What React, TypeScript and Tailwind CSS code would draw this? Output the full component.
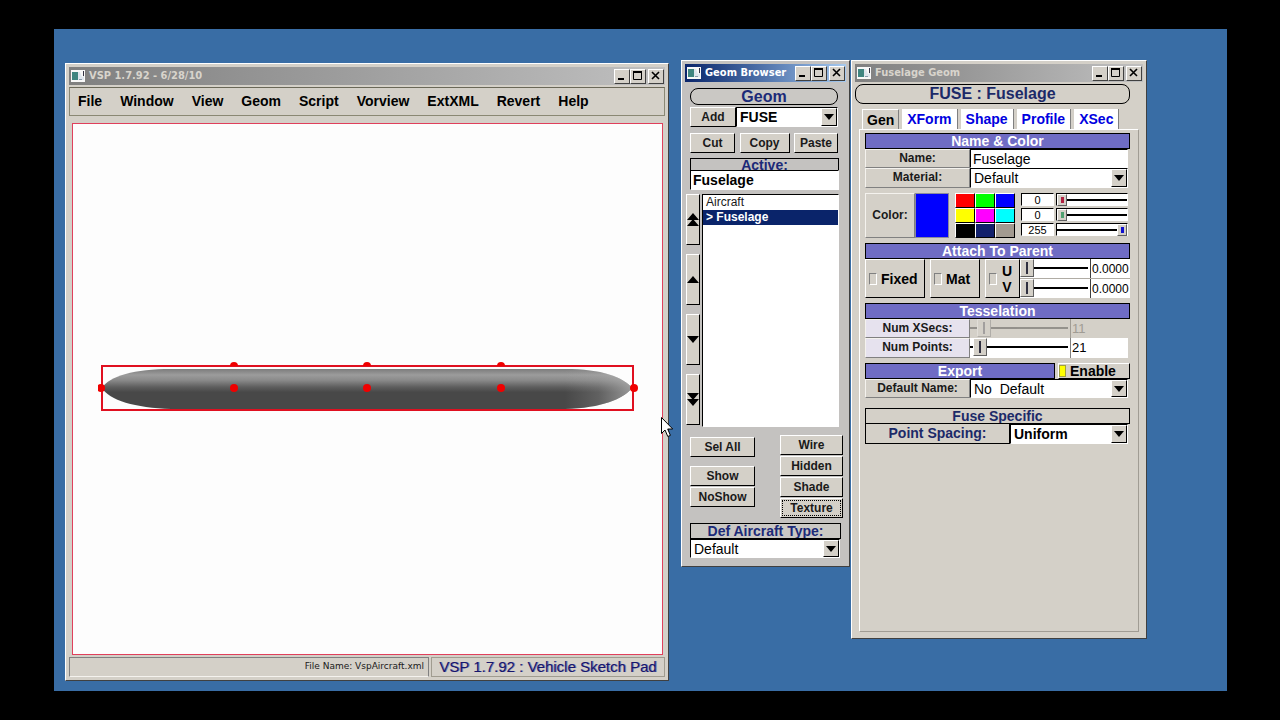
import type { ReactNode } from "react";

const raised =
  "border border-t-white border-l-white border-r-black border-b-black bg-[#d4d0c8]";
const sunken = "border border-t-black border-l-black border-r-white border-b-white bg-white";

function AppIcon() {
  return (
    <svg width="14" height="12" viewBox="0 0 14 12" aria-hidden="true" className="shrink-0">
      <rect x="0" y="0" width="14" height="12" fill="#f8f8f8" />
      <rect x="1" y="2" width="6" height="8" fill="#3f8580" />
      <path d="M7 2h2l2 5h1V2h1v8H7z" fill="#dfe6ee" />
      <path d="M12.500 1v5" stroke="#334" strokeWidth="1" />
      <rect x="8" y="9" width="3" height="1" fill="#8899aa" />
    </svg>
  );
}

function CaptionButton({ label, children, className = "" }: { label: string; children: ReactNode; className?: string }) {
  return (
    <button
      type="button"
      aria-label={label}
      className={`flex h-[15px] w-4 items-center justify-center border border-t-white border-l-white border-r-[#404040] border-b-[#404040] bg-[#d4d0c8] ${className}`}
    >
      <svg width="12" height="12" viewBox="0 0 12 12" fill="none" stroke="#000" aria-hidden="true" className="shrink-0">
        {children}
      </svg>
    </button>
  );
}

function AppWindow({ title, active = false, className, children }: { title: string; active?: boolean; className: string; children: ReactNode }) {
  const bar = active
    ? "bg-linear-to-r from-[#0a246a] to-[#a6caf0] text-white"
    : "bg-linear-to-r from-[#808080] to-[#c0c0c0] text-[#d8d4cc]";
  return (
    <section
      aria-label={title}
      className={`absolute flex flex-col border border-t-white border-l-white border-r-[#404040] border-b-[#404040] p-[3px] ${className}`}
    >
      <header className={`flex h-[18px] shrink-0 items-center gap-1 pr-px pl-[2px] ${bar}`}>
        <AppIcon />
        <h2 className="min-w-0 flex-1 whitespace-nowrap font-['DejaVu_Sans_Condensed','DejaVu_Sans',sans-serif] text-[11px] leading-4 font-bold">
          {title}
        </h2>
        <div className="flex">
          <CaptionButton label="Minimize">
            <path d="M2 9h6" strokeWidth="2" />
          </CaptionButton>
          <CaptionButton label="Maximize">
            <path d="M1.5 2.5h8v7h-8z" />
            <path d="M1 2h9" strokeWidth="2" />
          </CaptionButton>
          <CaptionButton label="Close" className="ml-[2px]">
            <path d="M2 2l7 7M9 2l-7 7" strokeWidth="1.600" />
          </CaptionButton>
        </div>
      </header>
      {children}
    </section>
  );
}

function PushButton({ children, className = "" }: { children: ReactNode; className?: string }) {
  return (
    <button type="button" className={`h-5 text-center text-xs leading-4 font-bold text-[#1a1a1a] ${raised} ${className}`}>
      {children}
    </button>
  );
}

function Choice({ label, value, className = "" }: { label: string; value: string; className?: string }) {
  return (
    <div className={`relative flex ${sunken} ${className}`}>
      <select aria-label={label} defaultValue={value} className="h-full w-full appearance-none bg-transparent pl-[3px] leading-4 text-black outline-none">
        <option>{value}</option>
      </select>
      <span className={`pointer-events-none absolute inset-y-0 right-0 flex w-4 items-center justify-center ${raised}`}>
        <svg width="10" height="6" viewBox="0 0 10 6" aria-hidden="true">
          <path d="M0 0h10L5 6z" />
        </svg>
      </span>
    </div>
  );
}

function SectionHeader({ children, className = "" }: { children: ReactNode; className?: string }) {
  return (
    <h3 className={`h-4 overflow-hidden border border-black bg-[#6f6cc4] text-center text-sm leading-[15px] font-bold text-white ${className}`}>
      {children}
    </h3>
  );
}

function Caption({ htmlFor, children, className = "" }: { htmlFor?: string; children: ReactNode; className?: string }) {
  return (
    <label
      htmlFor={htmlFor}
      className={`w-[105px] border border-t-[#f4f2ee] border-l-[#f4f2ee] border-r-[#808080] border-b-[#808080] text-center text-xs leading-[17px] font-bold text-[#1a1a1a] ${className}`}
    >
      {children}
    </label>
  );
}

function FuselageView() {
  return (
    <svg width="540" height="56" viewBox="1 1 540 56" role="img" aria-label="Fuselage side view" className="max-w-full">
      <defs>
        <linearGradient id="hull" x1="0" y1="0" x2="0" y2="1">
          <stop offset="0" stopColor="#7c7c7c" />
          <stop offset="0.15" stopColor="#9c9c9c" />
          <stop offset="0.28" stopColor="#8a8a8a" />
          <stop offset="0.45" stopColor="#5e5e5e" />
          <stop offset="0.58" stopColor="#484848" />
          <stop offset="1" stopColor="#484848" />
        </linearGradient>
        <linearGradient id="nose" x1="0" y1="0" x2="1" y2="0">
          <stop offset="0" stopColor="#aaa" stopOpacity="0" />
          <stop offset="0.5" stopColor="#aaa" stopOpacity="0.25" />
          <stop offset="1" stopColor="#b4b4b4" stopOpacity="0.75" />
        </linearGradient>
      </defs>
      <path d="M5 28C12 16 38 9 74 9H468C505 9 526 17 535 28C526 39 505 48 468 49H74C38 48 12 40 5 28Z" fill="url(#hull)" />
      <path d="M468 9C505 9 526 17 535 28C526 39 505 48 468 49Z" fill="url(#nose)" />
      <rect x="5" y="6" width="531" height="44" fill="none" stroke="#e01020" strokeWidth="2" />
      <g fill="#f00000">
        <circle cx="4" cy="28" r="4" />
        <circle cx="137" cy="28" r="4" />
        <circle cx="270" cy="28" r="4" />
        <circle cx="404" cy="28" r="4" />
        <circle cx="537" cy="28" r="4" />
        <path d="M133 6a4 4 0 0 1 8 0zM266 6a4 4 0 0 1 8 0zM400 6a4 4 0 0 1 8 0z" />
      </g>
    </svg>
  );
}

const menus = ["File", "Window", "View", "Geom", "Script", "Vorview", "ExtXML", "Revert", "Help"];

function MainWindow() {
  return (
    <AppWindow title="VSP 1.7.92 - 6/28/10" className="top-[34px] left-[11px] min-h-[618px] w-[604px] bg-[#d4d0c8]">
      <nav className="mt-[2px] flex h-[29px] items-center gap-[18px] border border-[#8a8874] border-t-[#6a6858] pb-px pl-2 text-sm font-bold">
        {menus.map((m) => (
          <button key={m} type="button">{m}</button>
        ))}
      </nav>
      <main className="mt-[7px] mr-[2px] ml-[3px] flex flex-1 items-center justify-center border border-[#e0405c] bg-[#fdfdfd]">
        <FuselageView />
      </main>
      <footer className="mt-[2px] flex h-5 gap-[2px] text-[#1a1a1a]">
        <p className="flex-1 border border-t-[#808080] border-l-[#808080] border-r-[#808080] border-b-[#f4f2ee] pr-1 text-right font-['DejaVu_Sans',sans-serif] text-[9px] leading-4">
          File Name: VspAircraft.xml
        </p>
        <p className="w-[234px] border border-[#a09c90] text-center text-[15px] leading-[18px] text-[#16166c] [text-shadow:1px_0_0_#7c7cb0]">
          VSP 1.7.92 : Vehicle Sketch Pad
        </p>
      </footer>
    </AppWindow>
  );
}

const arrows = [
  { label: "Move to top", d: "M0 7L6 0l6 7zM0 13L6 6l6 7z", h: 13 },
  { label: "Move up", d: "M0 7L6 0l6 7z", h: 7 },
  { label: "Move down", d: "M0 0h12L6 7z", h: 7 },
  { label: "Move to bottom", d: "M0 0h12L6 7zM0 6h12L6 13z", h: 13 },
];

function GeomBrowser() {
  return (
    <AppWindow title="Geom Browser" active className="top-[31px] left-[627px] min-h-[507px] w-[169px] bg-[#c4c2c0]">
      <div className="flex flex-col pt-[6px] pr-[6px] pl-[5px]">
        <h3 className="mr-[2px] h-[17px] rounded-lg border border-black bg-[#cac8c4] text-center text-base leading-[15px] font-bold text-[#1c2a78]">Geom</h3>
        <div className="mt-[2px] mr-[2px] flex">
          <PushButton className="w-[46px]">Add</PushButton>
          <Choice label="Geometry type" value="FUSE" className="h-5 flex-1 text-sm font-bold" />
        </div>
        <div className="mt-[6px] mr-[2px] flex justify-between">
          <PushButton className="w-[45px]">Cut</PushButton>
          <PushButton className="w-[50px]">Copy</PushButton>
          <PushButton className="w-[44px]">Paste</PushButton>
        </div>
        <label htmlFor="active-geom" className="mt-[5px] mr-px h-3 border border-b-0 border-black text-center text-sm leading-3 font-bold text-[#1c2a78]">
          Active:
        </label>
        <input id="active-geom" defaultValue="Fuselage" className={`mr-px h-5 min-w-0 pl-[2px] text-sm font-bold outline-none ${sunken}`} />
        <div className="mt-1 -ml-1 mr-px flex gap-[2px]">
          <div className="flex w-[14px] flex-col gap-[9px] pb-[2px]">
            {arrows.map((a) => (
              <button key={a.label} type="button" aria-label={a.label} className={`flex h-[51px] items-center justify-center ${raised}`}>
                <svg width="12" height={a.h} viewBox={`0 0 12 ${a.h}`} aria-hidden="true" className="shrink-0">
                  <path d={a.d} />
                </svg>
              </button>
            ))}
          </div>
          <ul className={`flex-1 text-xs leading-[15px] text-[#1a1a1a] ${sunken}`}>
            <li className="pl-[3px]">Aircraft</li>
            <li className="bg-[#0a246a] pl-[3px] font-bold text-white">&gt; Fuselage</li>
          </ul>
        </div>
        <div className="mt-2 -mr-[3px] flex justify-between">
          <div className="mt-[2px] flex w-[65px] flex-col">
            <PushButton className="mb-[9px]">Sel All</PushButton>
            <PushButton className="mb-px">Show</PushButton>
            <PushButton>NoShow</PushButton>
          </div>
          <div className="flex w-[63px] flex-col gap-px">
            <PushButton>Wire</PushButton>
            <PushButton>Hidden</PushButton>
            <PushButton>Shade</PushButton>
            <PushButton className="outline-1 -outline-offset-3 outline-black outline-dotted">Texture</PushButton>
          </div>
        </div>
        <h3 className="mt-[5px] -mr-px h-4 overflow-hidden border border-black bg-[#cac8c4] text-center text-sm leading-[15px] font-bold text-[#1c2a78]">
          Def Aircraft Type:
        </h3>
        <Choice label="Default aircraft type" value="Default" className="h-[19px] text-sm" />
      </div>
    </AppWindow>
  );
}

const palette = [
  { name: "Red", bg: "bg-[#ff0000]" },
  { name: "Green", bg: "bg-[#00ff00]" },
  { name: "Blue", bg: "bg-[#0000ff]" },
  { name: "Yellow", bg: "bg-[#ffff00]" },
  { name: "Magenta", bg: "bg-[#ff00ff]" },
  { name: "Cyan", bg: "bg-[#00ffff]" },
  { name: "Black", bg: "bg-black" },
  { name: "Navy", bg: "bg-[#12206c]" },
  { name: "Gray", bg: "bg-[#a29a90]" },
];

const channels = [
  { name: "Red", value: 0, thumb: "[&::-webkit-slider-thumb]:bg-[linear-gradient(#b02040,#b02040)]" },
  { name: "Green", value: 0, thumb: "[&::-webkit-slider-thumb]:bg-[linear-gradient(#50a070,#50a070)]" },
  { name: "Blue", value: 255, thumb: "[&::-webkit-slider-thumb]:bg-[linear-gradient(#1010d0,#1010d0)]" },
];

const slider =
  "m-0 min-w-0 appearance-none bg-[linear-gradient(#000,#000)] bg-[length:100%_2px] bg-center bg-no-repeat [&::-webkit-slider-thumb]:appearance-none [&::-webkit-slider-thumb]:border [&::-webkit-slider-thumb]:border-t-white [&::-webkit-slider-thumb]:border-l-white [&::-webkit-slider-thumb]:border-r-[#606060] [&::-webkit-slider-thumb]:border-b-[#606060] [&::-webkit-slider-thumb]:bg-[#d4d0c8] [&::-webkit-slider-thumb]:bg-center [&::-webkit-slider-thumb]:bg-no-repeat";
const smallThumb =
  "[&::-webkit-slider-thumb]:h-3 [&::-webkit-slider-thumb]:w-[10px] [&::-webkit-slider-thumb]:bg-[length:3px_6px]";
const largeThumb =
  "[&::-webkit-slider-thumb]:h-[18px] [&::-webkit-slider-thumb]:w-[14px] [&::-webkit-slider-thumb]:bg-[length:2px_12px] [&::-webkit-slider-thumb]:bg-[linear-gradient(#303040,#303040)]";

function Toggle({ children, className }: { children: ReactNode; className: string }) {
  return (
    <label className={`flex h-[39px] items-center gap-1 pl-[3px] text-sm font-bold ${raised} ${className}`}>
      <input
        type="checkbox"
        className="m-0 h-3 w-2 appearance-none border border-t-[#808080] border-l-[#808080] border-r-white border-b-white bg-[#d4d0c8]"
      />
      {children}
    </label>
  );
}

const tabs = ["Gen", "XForm", "Shape", "Profile", "XSec"];

function FuselageGeom() {
  return (
    <AppWindow title="Fuselage Geom" className="top-[31px] left-[797px] min-h-[579px] w-[296px] bg-[#d4d0c8]">
      <h3 className="mt-[2px] mr-[13px] h-5 rounded-lg border border-black text-center text-base leading-[18px] font-bold text-[#1c2a68]">
        FUSE : Fuselage
      </h3>
      <div role="tablist" className="mt-[5px] ml-[5px] flex h-5 gap-[3px] pl-[2px] text-sm font-bold">
        {tabs.map((t, i) => (
          <button
            key={t}
            type="button"
            role="tab"
            aria-selected={i === 0}
            className={
              i === 0
                ? "border-t border-l border-white border-r border-r-[#808080] px-1 text-black"
                : "border-r border-[#808080] bg-white px-[5px] text-[#0000e0]"
            }
          >
            {t}
          </button>
        ))}
      </div>
      <div className="mx-1 mb-[3px] flex flex-1 flex-col border border-t-white border-l-white border-r-[#a09c94] border-b-[#a09c94] pt-[3px] pr-2 pl-[5px]">
        <SectionHeader>Name &amp; Color</SectionHeader>
        <div className="flex h-[19px]">
          <Caption htmlFor="geom-name">Name:</Caption>
          <input id="geom-name" defaultValue="Fuselage" className={`mr-[2px] min-w-0 flex-1 pl-[2px] text-sm outline-none ${sunken}`} />
        </div>
        <div className="flex h-5">
          <Caption>Material:</Caption>
          <Choice label="Material" value="Default" className="mr-[2px] flex-1 text-sm" />
        </div>
        <div className="mt-[5px] flex h-[45px]">
          <p className="w-[50px] border border-t-[#f4f2ee] border-l-[#f4f2ee] border-r-[#808080] border-b-[#808080] text-center text-xs leading-[43px] font-bold text-[#1a1a1a]">
            Color:
          </p>
          <button type="button" aria-label="Current color" className="w-[34px] border border-[#8a8a9c] bg-[#0000ff]" />
          <div className="ml-[6px] grid w-[60px] grid-cols-3 grid-rows-3">
            {palette.map((c) => (
              <button
                key={c.name}
                type="button"
                aria-label={c.name}
                className={`border border-t-white border-l-white border-r-black border-b-black ${c.bg}`}
              />
            ))}
          </div>
          <div className="mr-[2px] ml-[6px] grid min-w-0 flex-1 grid-rows-3">
            {channels.map((c) => (
              <div key={c.name} className="flex min-h-0 gap-[2px] pb-[2px]">
                <input
                  aria-label={`${c.name} value`}
                  defaultValue={c.value}
                  className={`w-[33px] text-center text-[11px] leading-[11px] outline-none ${sunken}`}
                />
                <span className={`flex min-w-0 flex-1 ${sunken}`}>
                  <input
                    type="range"
                    aria-label={`${c.name} slider`}
                    min={0}
                    max={255}
                    defaultValue={c.value}
                    className={`h-[11px] w-full ${slider} ${smallThumb} ${c.thumb}`}
                  />
                </span>
              </div>
            ))}
          </div>
        </div>
        <SectionHeader className="mt-[5px]">Attach To Parent</SectionHeader>
        <div className="flex">
          <Toggle className="w-[60px]">Fixed</Toggle>
          <Toggle className="ml-[5px] w-[50px]">Mat</Toggle>
          <Toggle className="ml-[5px] w-[35px]">
            <span className="w-3 text-center leading-4">
              U
              <br />V
            </span>
          </Toggle>
          <div className="flex min-w-0 flex-1 flex-col">
            {["U", "V"].map((axis) => (
              <div key={axis} className="flex h-[19px] bg-white not-first:h-5 not-first:border-t not-first:border-[#b0aca4]">
                <input
                  type="range"
                  aria-label={`${axis} position slider`}
                  defaultValue={0}
                  className={`h-[18px] w-[68px] ${slider} ${largeThumb}`}
                />
                <input
                  aria-label={`${axis} position`}
                  defaultValue="0.0000"
                  className="ml-[2px] min-w-0 flex-1 border-l border-[#404040] pl-px text-xs outline-none"
                />
              </div>
            ))}
          </div>
        </div>
        <SectionHeader className="mt-[5px]">Tesselation</SectionHeader>
        <div className="flex h-[19px]">
          <Caption htmlFor="num-xsecs" className="bg-[#e6e2ee]">Num XSecs:</Caption>
          <input
            type="range"
            aria-label="Num XSecs slider"
            disabled
            defaultValue={8}
            className={`h-[18px] w-[98px] opacity-30 ${slider} ${largeThumb}`}
          />
          <input
            id="num-xsecs"
            disabled
            defaultValue="11"
            className="ml-[2px] min-w-0 flex-1 border-l border-[#a09c94] pl-px text-[13px] text-[#a09c94]"
          />
        </div>
        <div className="mr-[2px] flex h-5 bg-white">
          <Caption htmlFor="num-points" className="bg-[#e6e2ee]">Num Points:</Caption>
          <input
            type="range"
            aria-label="Num Points slider"
            defaultValue={3}
            className={`h-[18px] w-[98px] ${slider} ${largeThumb}`}
          />
          <input
            id="num-points"
            defaultValue="21"
            className="ml-[2px] min-w-0 flex-1 border-l border-[#808080] pl-px text-[13px] outline-none"
          />
        </div>
        <div className="mt-[5px] flex">
          <SectionHeader className="w-[190px]">Export</SectionHeader>
          <button type="button" className={`ml-[3px] flex h-4 flex-1 items-center gap-1 overflow-hidden text-sm leading-4 font-bold ${raised}`}>
            <span className="h-3 w-[7px] border border-[#a0a040] bg-[#ffff00]" />
            Enable
          </button>
        </div>
        <div className="flex h-[19px]">
          <Caption>Default Name:</Caption>
          <Choice label="Default name" value={"No\u00a0 Default"} className="mr-[2px] flex-1 text-sm" />
        </div>
        <h3 className="mt-[10px] h-4 overflow-hidden border border-black text-center text-sm leading-[15px] font-bold text-[#1c2a68]">
          Fuse Specific
        </h3>
        <div className="flex h-5">
          <p className="w-[145px] border border-t-0 border-black text-center text-sm leading-[18px] font-bold text-[#1c2a68]">Point Spacing:</p>
          <Choice label="Point spacing" value="Uniform" className="mr-[2px] flex-1 text-sm font-bold" />
        </div>
      </div>
    </AppWindow>
  );
}

export default function App() {
  return (
    <div className="flex min-h-screen flex-col bg-black pt-[29px] pr-[53px] pb-[29px] pl-[54px] font-['Liberation_Sans',Arial,sans-serif] text-black">
      <div className="relative flex-1 bg-[#396da5]">
        <MainWindow />
        <GeomBrowser />
        <FuselageGeom />
        <svg width="13" height="21" viewBox="0 0 13 21" aria-hidden="true" className="absolute top-[388px] left-[607px]">
          <path d="M0.5 0.5v16l3.5-3.5 2.8 6.5 2.6-1.1L6.7 12h5z" fill="#fff" stroke="#000" />
        </svg>
      </div>
    </div>
  );
}
